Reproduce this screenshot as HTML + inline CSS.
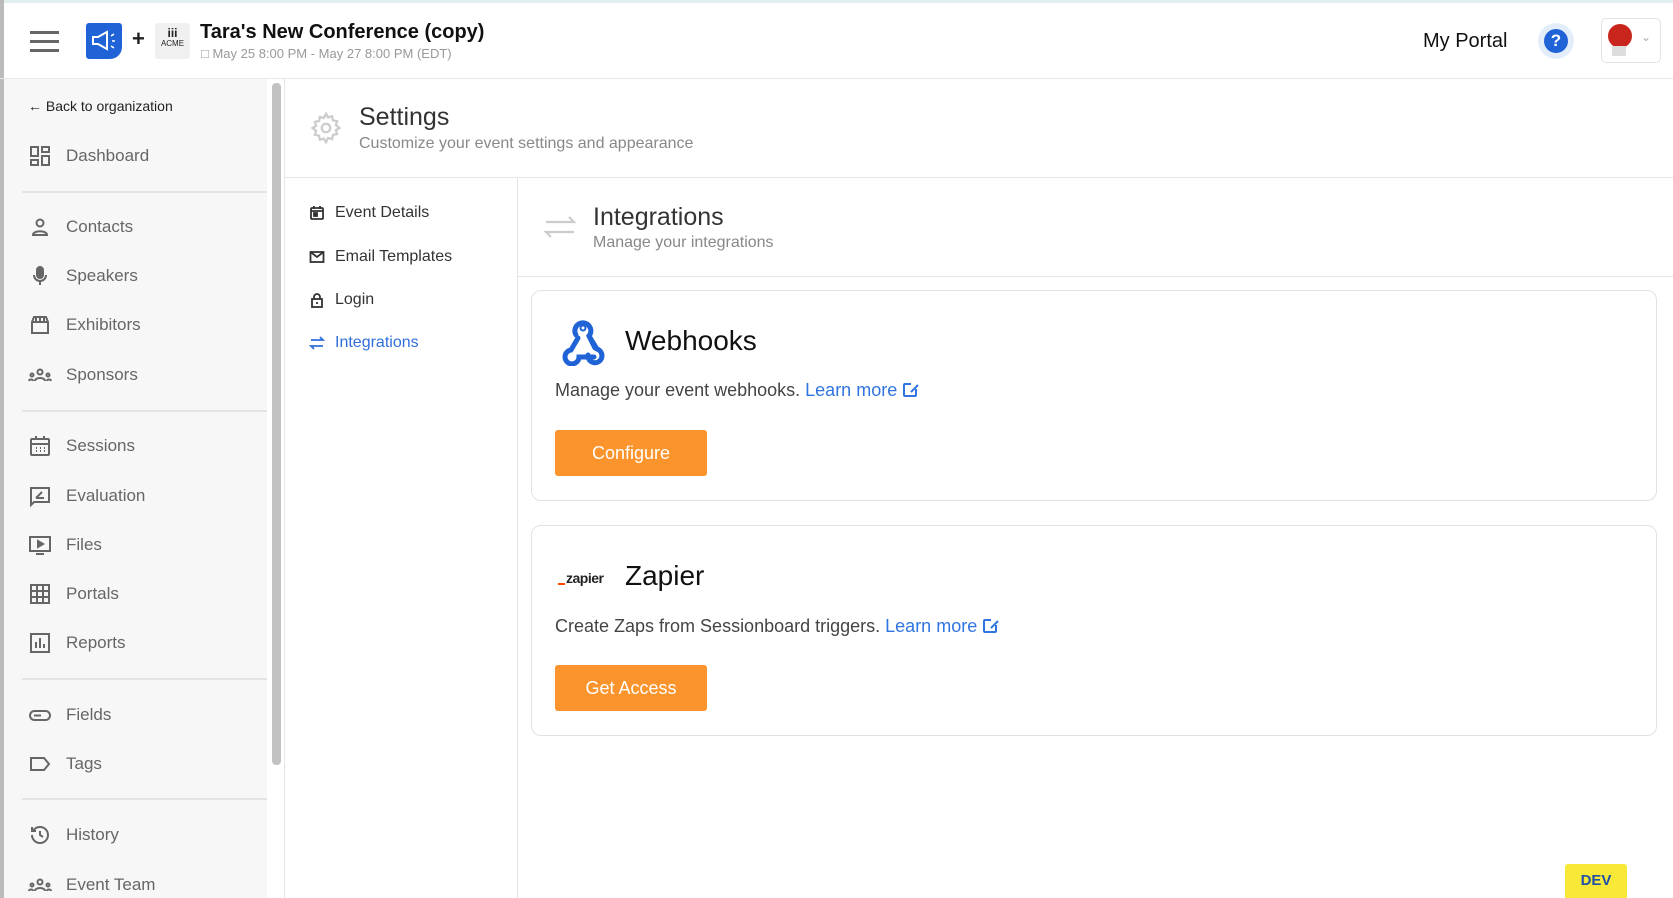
<!DOCTYPE html>
<html><head><meta charset="utf-8"><style>
*{box-sizing:border-box;margin:0;padding:0}
body{width:1673px;height:898px;overflow:hidden;background:#fff;font-family:"Liberation Sans",sans-serif;position:relative;color:#222}
.a{position:absolute;white-space:nowrap}
.side{position:absolute;left:4px;top:79px;width:263px;height:819px;background:#f7f7f7}
.si{position:absolute;left:28px;display:flex;align-items:center;font-size:17px;color:#666}
.si svg{width:24px;height:24px;margin-right:14px;fill:none;stroke:#666;stroke-width:2}
.div{position:absolute;left:22px;width:245px;height:2px;background:#e4e4e4}
.nav{position:absolute;left:309px;display:flex;align-items:center;font-size:16px;color:#333}
.nav svg{width:16px;height:16px;margin-right:10px;fill:none;stroke:#333;stroke-width:1.8}
.card{position:absolute;left:531px;width:1126px;height:211px;border:1px solid #e2e2e2;border-radius:10px;background:#fff}
.btn{position:absolute;left:23px;width:152px;height:46px;background:#fb942c;border-radius:3px;color:#fff;font-size:18px;display:flex;align-items:center;justify-content:center}
.ct{position:absolute;left:93px;font-size:28px;color:#111}
.cd{position:absolute;left:23px;font-size:18px;color:#444}
.cd span{color:#2f74e0}
.ext{display:inline-block;width:14px;height:14px;border:2px solid #2f74e0;border-radius:2px;margin-left:6px;vertical-align:-1px;position:relative}
.ext:after{content:"";position:absolute;right:-3px;top:-3px;width:7px;height:7px;background:#fff}
.ext:before{content:"";position:absolute;right:-3px;top:-1px;width:10px;height:2px;background:#2f74e0;transform:rotate(-45deg);transform-origin:right;z-index:1}
</style></head><body>
<div class="a" style="left:0;top:0;width:1673px;height:3px;background:#e3efef"></div>
<div class="a" style="left:0;top:0;width:4px;height:898px;background:#bbb"></div>
<div class="a" style="left:30px;top:31px;width:29px;height:3px;background:#666;box-shadow:0 9px 0 #666,0 18px 0 #666"></div>
<div class="a" style="left:86px;top:23px;width:36px;height:36px;background:#1f63d6;border-radius:3px 3px 12px 3px">
<svg width="36" height="36" viewBox="0 0 36 36"><path d="M7 14h5l9-5v17l-9-5H7z" fill="none" stroke="#fff" stroke-width="2"/><path d="M25 13l3-2M26 18h3M25 23l3 2" stroke="#fff" stroke-width="1.6"/></svg></div>
<div class="a" style="left:132px;top:26px;font-size:22px;font-weight:bold">+</div>
<div class="a" style="left:155px;top:23px;width:35px;height:36px;background:#f0f0f0;border-radius:3px;text-align:center;font-size:8px;line-height:9px;padding-top:6px;color:#222"><b style="font-size:12px">iii</b><br>ACME</div>
<div class="a" style="left:200px;top:21px;font-size:20px;font-weight:bold;color:#111">Tara's New Conference (copy)</div>
<div class="a" style="left:201px;top:46px;font-size:13px;color:#999">&#9633; May 25 8:00 PM - May 27 8:00 PM (EDT)</div>
<div class="a" style="left:1423px;top:30px;font-size:20px;color:#111">My Portal</div>
<div class="a" style="left:1538px;top:23px;width:36px;height:36px;border-radius:50%;background:#e3edfa"></div>
<div class="a" style="left:1544px;top:29px;width:24px;height:24px;border-radius:50%;background:#1f63d6;color:#fff;font-weight:bold;font-size:17px;text-align:center;line-height:24px">?</div>
<div class="a" style="left:1601px;top:18px;width:60px;height:45px;border:1px solid #e2e2e2;border-radius:5px"></div>
<div class="a" style="left:1608px;top:24px;width:24px;height:24px;border-radius:50%;background:#c8261c"></div>
<div class="a" style="left:1612px;top:46px;width:14px;height:10px;background:#ddd"></div>
<div class="a" style="left:1641px;top:30px;font-size:12px;color:#aaa">&#8964;</div>
<div class="a" style="left:0;top:78px;width:1673px;height:1px;background:#e8e8e8"></div>
<div class="side"></div>
<div class="a" style="left:272px;top:83px;width:9px;height:682px;background:#c2c2c2;border-radius:4px"></div>
<div class="a" style="left:284px;top:79px;width:1px;height:819px;background:#e5e5e5"></div>
<div class="a" style="left:28px;top:98px;font-size:14px;color:#222">&#8592; Back to organization</div>
<div class="si" style="top:144px"><svg viewBox="0 0 24 24"><rect x="3" y="3" width="7" height="9"/><rect x="14" y="3" width="7" height="5"/><rect x="14" y="12" width="7" height="9"/><rect x="3" y="16" width="7" height="5"/></svg>Dashboard</div>
<div class="div" style="top:191px"></div>
<div class="si" style="top:215px"><svg viewBox="0 0 24 24"><circle cx="12" cy="8" r="3.5"/><path d="M5 20c0-5 14-5 14 0z"/></svg>Contacts</div>
<div class="si" style="top:264px"><svg viewBox="0 0 24 24"><rect x="9" y="3" width="6" height="11" rx="3" fill="#666"/><path d="M6 11a6 6 0 0012 0M12 17v4"/></svg>Speakers</div>
<div class="si" style="top:313px"><svg viewBox="0 0 24 24"><path d="M4 9l2-5h12l2 5v11H4zM4 9h16M8 4v5M12 4v5M16 4v5"/></svg>Exhibitors</div>
<div class="si" style="top:363px"><svg viewBox="0 0 24 24"><circle cx="12" cy="9" r="2.5"/><circle cx="4" cy="12" r="1.5"/><circle cx="20" cy="12" r="1.5"/><path d="M7 18c0-4 10-4 10 0M1 18c0-2 4-2 4 0M19 18c0-2 4-2 4 0"/></svg>Sponsors</div>
<div class="div" style="top:410px"></div>
<div class="si" style="top:434px"><svg viewBox="0 0 24 24"><rect x="3" y="5" width="18" height="16" rx="1"/><path d="M3 10h18M8 2v4M16 2v4M8 14h1M12 14h1M16 14h1M8 17h1M12 17h1M16 17h1"/></svg>Sessions</div>
<div class="si" style="top:484px"><svg viewBox="0 0 24 24"><path d="M3 21V4h18v14H6zM8 14l6-6M8 14h8"/></svg>Evaluation</div>
<div class="si" style="top:533px"><svg viewBox="0 0 24 24"><rect x="2" y="4" width="20" height="14"/><path d="M10 8v6l5-3z" fill="#666"/><path d="M8 21h8"/></svg>Files</div>
<div class="si" style="top:582px"><svg viewBox="0 0 24 24"><rect x="3" y="3" width="18" height="18"/><path d="M9 3v18M15 3v18M3 9h18M3 15h18"/></svg>Portals</div>
<div class="si" style="top:631px"><svg viewBox="0 0 24 24"><rect x="3" y="3" width="18" height="18"/><path d="M8 17v-6M12 17V7M16 17v-4"/></svg>Reports</div>
<div class="div" style="top:678px"></div>
<div class="si" style="top:703px"><svg viewBox="0 0 24 24"><rect x="2" y="8" width="20" height="9" rx="4.5"/><path d="M6 12.5h7"/></svg>Fields</div>
<div class="si" style="top:752px"><svg viewBox="0 0 24 24"><path d="M3 6h13l5 6-5 6H3z"/></svg>Tags</div>
<div class="div" style="top:798px"></div>
<div class="si" style="top:823px"><svg viewBox="0 0 24 24"><path d="M4 12a8 8 0 108-8 8 8 0 00-7 4M4 4v4h4M12 8v4l3 2"/></svg>History</div>
<div class="si" style="top:873px"><svg viewBox="0 0 24 24"><circle cx="12" cy="9" r="2.5"/><circle cx="4" cy="12" r="1.5"/><circle cx="20" cy="12" r="1.5"/><path d="M7 18c0-4 10-4 10 0M1 18c0-2 4-2 4 0M19 18c0-2 4-2 4 0"/></svg>Event Team</div>
<svg class="a" style="left:309px;top:111px" width="34" height="34" viewBox="0 0 24 24" fill="none" stroke="#ccc" stroke-width="1.6"><circle cx="12" cy="12" r="3"/><path d="M12 2l1.5 2.5 2.8-.8.6 2.9 2.9.6-.8 2.8L21.5 12l-2.5 1.5.8 2.8-2.9.6-.6 2.9-2.8-.8L12 22l-1.5-2.5-2.8.8-.6-2.9-2.9-.6.8-2.8L2.5 12 5 10.5l-.8-2.8 2.9-.6.6-2.9 2.8.8z"/></svg>
<div class="a" style="left:359px;top:103px;font-size:25px;color:#333">Settings</div>
<div class="a" style="left:359px;top:135px;font-size:16px;color:#888">Customize your event settings and appearance</div>
<div class="a" style="left:285px;top:177px;width:1388px;height:1px;background:#e5e5e5"></div>
<div class="a" style="left:517px;top:178px;width:1px;height:720px;background:#e5e5e5"></div>
<div class="nav" style="top:204px"><svg viewBox="0 0 16 16"><rect x="2" y="3" width="12" height="11" rx="1"/><path d="M2 6h12M5 1v3M11 1v3"/><rect x="5" y="8" width="3" height="3" fill="#333"/></svg>Event Details</div>
<div class="nav" style="top:248px"><svg viewBox="0 0 16 16"><rect x="1.5" y="3" width="13" height="10"/><path d="M1.5 3l6.5 5 6.5-5"/></svg>Email Templates</div>
<div class="nav" style="top:291px"><svg viewBox="0 0 16 16"><rect x="3" y="7" width="10" height="8"/><path d="M5 7V5a3 3 0 016 0v2"/><path d="M8 10v2"/></svg>Login</div>
<div class="nav" style="top:334px;color:#2f6fdb"><svg viewBox="0 0 16 16" style="stroke:#2f6fdb"><path d="M2 5h12l-3-3M14 11H2l3 3"/></svg>Integrations</div>
<svg class="a" style="left:544px;top:214px" width="32" height="26" viewBox="0 0 32 26" fill="none" stroke="#ccc" stroke-width="2.2"><path d="M2 8h28l-5-5M30 18H2l5 5"/></svg>
<div class="a" style="left:593px;top:203px;font-size:25px;color:#333">Integrations</div>
<div class="a" style="left:593px;top:234px;font-size:16px;color:#888">Manage your integrations</div>
<div class="a" style="left:518px;top:276px;width:1155px;height:1px;background:#e5e5e5"></div>
<div class="card" style="top:290px">
<svg class="a" style="left:26px;top:27px" width="50" height="48" viewBox="0 0 50 48" fill="none" stroke="#1f63d6" stroke-width="5" stroke-linecap="round"><path d="M20 20L13 32a7 7 0 10 8 7h15"/><path d="M18 17a8 8 0 1113 1l6 12"/><path d="M30 37a7 7 0 10 9-6L31 18"/><circle cx="25" cy="10" r="1"/></svg>
<div class="ct" style="top:34px">Webhooks</div>
<div class="cd" style="top:89px">Manage your event webhooks. <span>Learn more</span><i class="ext"></i></div>
<div class="btn" style="top:139px">Configure</div>
</div>
<div class="card" style="top:525px">
<div class="a" style="left:26px;top:44px;font-size:14px;font-weight:bold;color:#222;letter-spacing:-0.5px"><span style="display:inline-block;width:7px;height:2px;background:#ff4a00;vertical-align:-2px;margin-right:1px"></span>zapier</div>
<div class="ct" style="top:34px">Zapier</div>
<div class="cd" style="top:90px">Create Zaps from Sessionboard triggers. <span>Learn more</span><i class="ext"></i></div>
<div class="btn" style="top:139px">Get Access</div>
</div>
<div class="a" style="left:1565px;top:864px;width:62px;height:34px;background:#f8e838;border-radius:3px 3px 0 0;text-align:center;line-height:34px;font-size:15px;color:#1f4fa8;font-weight:bold">DEV</div>
</body></html>
